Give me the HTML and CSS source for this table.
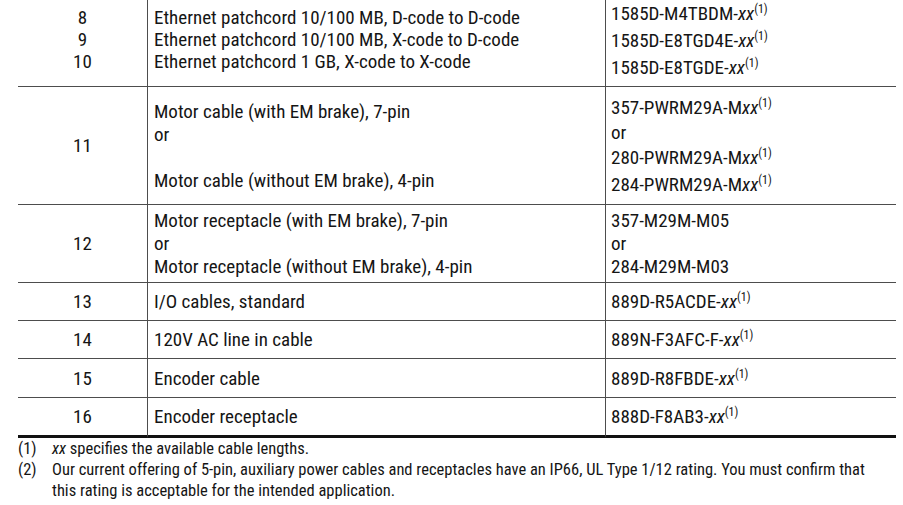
FILE: index.html
```html
<!DOCTYPE html>
<html lang="en">
<head>
<meta charset="utf-8">
<title>Cable and receptacle catalog numbers</title>
<link rel="stylesheet" href="styles.css">
</head>
<body>
<div class="page">
  <table class="parts">
    <colgroup>
      <col class="c-num">
      <col class="c-desc">
      <col class="c-pn">
    </colgroup>
    <tbody>
      <tr class="r-first">
        <td class="num">
          <div class="ln">8</div>
          <div class="ln">9</div>
          <div class="ln">10</div>
        </td>
        <td class="desc">
          <div class="ln">Ethernet patchcord 10/100 MB, D-code to D-code</div>
          <div class="ln">Ethernet patchcord 10/100 MB, X-code to D-code</div>
          <div class="ln">Ethernet patchcord 1 GB, X-code to X-code</div>
        </td>
        <td class="pn">
          <div class="ln sl">1585D-M4TBDM-<i>xx</i><sup>(1)</sup></div>
          <div class="ln sl">1585D-E8TGD4E-<i>xx</i><sup>(1)</sup></div>
          <div class="ln sl">1585D-E8TGDE-<i>xx</i><sup>(1)</sup></div>
        </td>
      </tr>
      <tr class="r-tall">
        <td class="num">11</td>
        <td class="desc">
          <div class="ln">Motor cable (with EM brake), 7-pin</div>
          <div class="ln">or</div>
          <div class="ln">&nbsp;</div>
          <div class="ln">Motor cable (without EM brake), 4-pin</div>
        </td>
        <td class="pn">
          <div class="ln sl">357-PWRM29A-M<i>xx</i><sup>(1)</sup></div>
          <div class="ln">or</div>
          <div class="ln sl">280-PWRM29A-M<i>xx</i><sup>(1)</sup></div>
          <div class="ln sl">284-PWRM29A-M<i>xx</i><sup>(1)</sup></div>
        </td>
      </tr>
      <tr class="r-mid">
        <td class="num">12</td>
        <td class="desc">
          <div class="ln">Motor receptacle (with EM brake), 7-pin</div>
          <div class="ln">or</div>
          <div class="ln">Motor receptacle (without EM brake), 4-pin</div>
        </td>
        <td class="pn">
          <div class="ln">357-M29M-M05</div>
          <div class="ln">or</div>
          <div class="ln">284-M29M-M03</div>
        </td>
      </tr>
      <tr class="r-one">
        <td class="num">13</td>
        <td class="desc">I/O cables, standard</td>
        <td class="pn"><div class="ln sl">889D-R5ACDE-<i>xx</i><sup>(1)</sup></div></td>
      </tr>
      <tr class="r-one">
        <td class="num">14</td>
        <td class="desc">120V AC line in cable</td>
        <td class="pn"><div class="ln sl">889N-F3AFC-F-<i>xx</i><sup>(1)</sup></div></td>
      </tr>
      <tr class="r-one r-plus">
        <td class="num">15</td>
        <td class="desc">Encoder cable</td>
        <td class="pn"><div class="ln sl">889D-R8FBDE-<i>xx</i><sup>(1)</sup></div></td>
      </tr>
      <tr class="r-last">
        <td class="num">16</td>
        <td class="desc">Encoder receptacle</td>
        <td class="pn"><div class="ln sl">888D-F8AB3-<i>xx</i><sup>(1)</sup></div></td>
      </tr>
    </tbody>
  </table>

  <ol class="notes">
    <li class="note"><span class="mark">(1)</span><span class="ntext"><i>xx</i> specifies the available cable lengths.</span></li>
    <li class="note"><span class="mark">(2)</span><span class="ntext">Our current offering of 5-pin, auxiliary power cables and receptacles have an IP66, UL Type 1/12 rating. You must confirm that this rating is acceptable for the intended application.</span></li>
  </ol>
</div>
</body>
</html>
```

FILE: styles.css
```css
html, body {
  margin: 0;
  padding: 0;
  background: #ffffff;
}

body {
  font-family: "Roboto Condensed", "DejaVu Sans Condensed", sans-serif;
  font-weight: 400;
  color: #151515;
  overflow: hidden;
}

.page {
  padding-left: 18px;
}

.parts {
  border-collapse: separate;
  border-spacing: 0;
  table-layout: fixed;
  width: 878px;
  margin-top: -6px;
}

.c-num { width: 129px; }
.c-desc { width: 458px; }
.c-pn { width: 291px; }

.parts td {
  padding: 0 6px;
  vertical-align: middle;
  border-bottom: 1px solid #4d4d4d;
  font-size: 19px;
  line-height: 23px;
  white-space: nowrap;
}

.parts td.desc,
.parts td.pn {
  border-left: 1px solid #4d4d4d;
}

.parts td.pn {
  padding-left: 5px;
}

.parts td.num {
  text-align: center;
}

.r-first td.num .ln,
.r-first td.desc .ln {
  line-height: 22px;
}

.ln.sl {
  line-height: 27px;
}

.parts i {
  font-style: italic;
}

.parts sup {
  font-size: 12px;
  line-height: 1;
  vertical-align: 7px;
}

.r-first { height: 93px; }
.r-tall { height: 118px; }
.r-mid { height: 78px; }
.r-one { height: 38px; }
.r-plus { height: 39px; }
.r-last { height: 40px; }

.r-last td {
  border-bottom: 3px solid #111111;
}

.notes {
  list-style: none;
  margin: 0;
  padding: 0;
  width: 860px;
  font-size: 16.5px;
  line-height: 21px;
}

.note {
  display: grid;
  grid-template-columns: 34px 1fr;
}

.mark {
  display: block;
}
```
